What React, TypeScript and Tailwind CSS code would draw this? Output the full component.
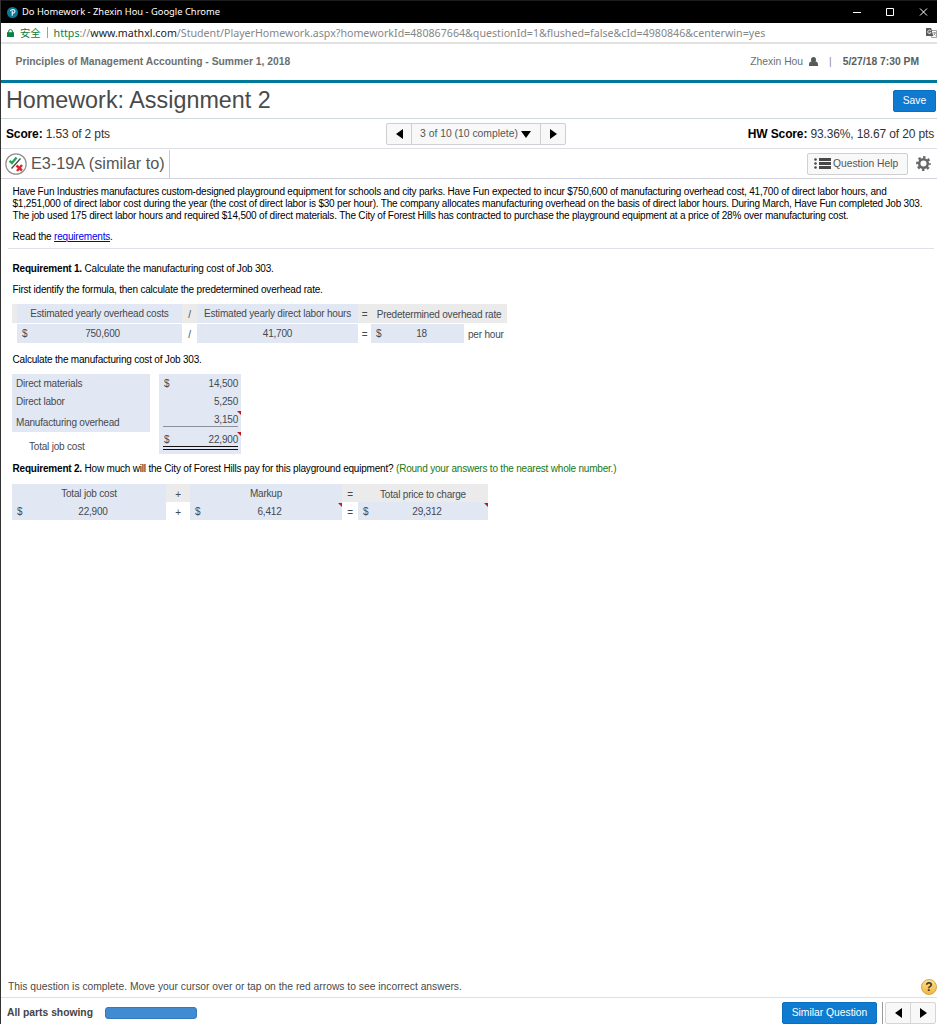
import { clsx } from "clsx";
import type { ReactNode } from "react";

export default function App() {
  return (
    <div className="flex h-[1024px] w-[937px] flex-col overflow-hidden whitespace-nowrap border-l border-[#333333] bg-white font-['Liberation_Sans',Arial,sans-serif] leading-[12px] text-black">
      <TitleBar />
      <AddressBar />
      <CourseHeader />
      <AssignmentHeader />
      <main className="min-h-0 flex-1 pl-[11px] text-[10px] tracking-[-0.2px]">
        <Problem />
        <RequirementOne />
        <RequirementTwo />
      </main>
      <StatusLine />
      <Footer />
    </div>
  );
}

function TitleBar() {
  return (
    <div className="flex h-[23px] shrink-0 items-center border-t border-[#1c1c1c] bg-black pl-[6px] pr-[8px] text-white">
      <svg viewBox="0 0 12 12" className="h-[11px] w-[11px]">
        <circle cx="6" cy="6" r="6" fill="#087a9c" />
        <path
          d="M3.6 4.2c1.8-2.2 5.2-1.8 5.1.5-.1 1.5-1.6 2-3.2 1.8M5.7 3.8v5.7"
          fill="none"
          stroke="#fff"
          strokeWidth="1.1"
        />
      </svg>
      <span className="ml-[4px] font-['Noto_Sans',sans-serif] text-[9.35px]">
        Do Homework - Zhexin Hou - Google Chrome
      </span>
      <svg viewBox="0 0 77 10" className="ml-auto h-[10px] w-[77px]" fill="none" stroke="#fff">
        <path d="M1 5.5h8M34.5 1.5h7v7h-7zM68 1.5l7 7M75 1.5l-7 7" />
      </svg>
    </div>
  );
}

function AddressBar() {
  return (
    <div className="flex h-[21px] shrink-0 items-center border-b-2 border-[#e2e2e2] pl-[6px] font-['Noto_Sans',sans-serif] text-[10.65px] text-[#868686]">
      <svg viewBox="0 0 7 8" className="h-[8px] w-[7px]">
        <path d="M0 3.2h7V8H0z" fill="#0b8043" />
        <path d="M1.7 4V2a1.8 1.4 0 0 1 3.6 0v2" fill="none" stroke="#0b8043" />
      </svg>
      <span className="ml-[6px] font-['Noto_Sans_CJK_SC',sans-serif] text-[10.3px] text-[#0b8043]">
        安全
      </span>
      <span className="ml-[6px] h-[11px] w-px bg-[#a0a0a0]" />
      <span className="ml-[6px]">
        <span className="text-[#0b8043]">https</span>://<span className="text-[#222222]">www.mathxl.com</span>
        /Student/PlayerHomework.aspx?homeworkId=480867664&amp;questionId=1&amp;flushed=false&amp;cId=4980846&amp;centerwin=yes
      </span>
      <svg viewBox="0 0 11 10" className="ml-auto h-[10px] w-[11px]">
        <path d="M3.5 2.5h7v7h-5z" fill="#fff" stroke="#8a8a8a" strokeWidth=".8" />
        <path d="M0 0h5.2l2 8H0z" fill="#5a5a5a" />
        <path d="M4.9 3A1.7 1.7 0 1 0 5 4.6H3.6" fill="none" stroke="#fff" strokeWidth=".8" />
        <path d="M7 4.8h3M8.5 4v.8M9.5 4.8 7.6 7.4M7.8 5.8l1.8 1.7" stroke="#777" strokeWidth=".7" />
      </svg>
    </div>
  );
}

function CourseHeader() {
  return (
    <div className="flex h-[39px] shrink-0 items-center border-b-[3px] border-[#007a9c] pl-[14.5px] pr-[18px] text-[10.32px] text-[#6a7070]">
      <span className="font-bold">Principles of Management Accounting - Summer 1, 2018</span>
      <span className="ml-auto">Zhexin Hou</span>
      <svg viewBox="0 0 9 9" className="mb-px ml-[6px] h-[9px] w-[9px]" fill="#555b5b">
        <ellipse cx="4.5" cy="2.7" rx="2.5" ry="2.7" />
        <path d="M2 4.6h5C8.5 5 9 6.3 9 7.7V9H0V7.7C0 6.3.5 5 2 4.6z" />
      </svg>
      <span className="ml-[11px] text-[#8a8f8f]">|</span>
      <span className="ml-[11px] font-bold text-[#5a6060]">5/27/18 7:30 PM</span>
    </div>
  );
}

function AssignmentHeader() {
  return (
    <header className="shrink-0 text-[12px] tracking-[-0.14px]">
      <div className="flex h-[36px] items-center border-b border-[#d0d8dc] pl-[5px] pr-px">
        <h1 className="pb-px text-[23.3px] leading-[28px] tracking-[0.03px] text-[#4a4a4a]">Homework: Assignment 2</h1>
        <PrimaryButton className="ml-auto w-[43px]">Save</PrimaryButton>
      </div>
      <div className="grid h-[30px] grid-cols-[385px_180px_1fr] items-center border-b border-[#dcdee8] pl-[5px] pr-[3px] text-[#333333]">
        <span>
          <b className="text-black">Score:</b> 1.53 of 2 pts
        </span>
        <div className="-ml-[5px] flex h-[22px] w-[180px] divide-x divide-[#cfcfcf] rounded-[2px] border border-[#cfcfcf] bg-[#f8f8f8] text-[10.36px] tracking-normal text-[#555555]">
          <ArrowCell direction="left" className="w-[25px]" />
          <div className="flex flex-1 items-center pl-[8px]">
            3 of 10 (10 complete)
            <svg viewBox="0 0 10 7" className="ml-[3px] mt-px h-[7px] w-[10px]">
              <path d="M0 0h10L5 7z" />
            </svg>
          </div>
          <ArrowCell direction="right" className="w-[24px]" />
        </div>
        <span className="text-right">
          <b className="text-black">HW Score:</b> 93.36%, 18.67 of 20 pts
        </span>
      </div>
      <div className="flex h-[30px] items-center border-b border-[#d4d4e0] pl-[4px] pr-[6px] tracking-normal">
        <CheckCrossIcon />
        <h2 className="ml-[4px] pb-[2px] text-[16.25px] leading-[20px] text-[#555555]">E3-19A (similar to)</h2>
        <span className="ml-[4px] h-[28px] w-px bg-[#c8ccd8]" />
        <div className="ml-auto flex h-[22px] w-[101px] items-center rounded-[2px] border border-[#d0d0d0] bg-[#f8f8f8] pl-[6px] text-[10.3px] text-[#555555]">
          <svg viewBox="0 0 17 11" className="h-[11px] w-[17px]" fill="#484848">
            <path d="M5 0h12v3H5zM5 4h12v3H5zM5 8h12v3H5z" />
            <circle cx="1.5" cy="1.5" r="1.3" />
            <circle cx="1.5" cy="5.5" r="1.3" />
            <circle cx="1.5" cy="9.5" r="1.3" />
          </svg>
          <span className="ml-[2px]">Question Help</span>
        </div>
        <GearIcon />
      </div>
    </header>
  );
}

function Problem() {
  return (
    <section className="pl-[0.5px] pt-[7px]">
      <p>
        Have Fun Industries manufactures custom-designed playground equipment for schools and city parks. Have Fun
        expected to incur $750,600 of manufacturing overhead cost, 41,700 of direct labor hours, and
        <br />
        $1,251,000 of direct labor cost during the year (the cost of direct labor is $30 per hour). The company
        allocates manufacturing overhead on the basis of direct labor hours. During March, Have Fun completed Job 303.
        <br />
        The job used 175 direct labor hours and required $14,500 of direct materials. The City of Forest Hills has
        contracted to purchase the playground equipment at a price of 28% over manufacturing cost.
      </p>
      <p className="mt-[9px]">
        Read the <a href="#requirements" className="text-[#0000ee] underline">requirements</a>.
      </p>
      <hr className="-ml-[5px] mr-[3px] mt-[5px] border-[#dfe1e8]" />
    </section>
  );
}

function RequirementOne() {
  return (
    <section>
      <p className="mt-[14px] pl-[0.5px]">
        <b>Requirement 1.</b> Calculate the manufacturing cost of Job 303.
      </p>
      <p className="mt-[9px] pl-[0.5px]">
        First identify the formula, then calculate the predetermined overhead rate.
      </p>

      <div className="mt-[8px] grid w-[495px] grid-cols-[5px_165px_15px_161px_13px_93px_43px] grid-rows-[19px_19px] gap-y-px text-center leading-[20px] text-[#444a50]">
        <Cell tone="gray" />
        <Cell tone="blue">Estimated yearly overhead costs</Cell>
        <Cell tone="gray" low>/</Cell>
        <Cell tone="blue">Estimated yearly direct labor hours</Cell>
        <Cell tone="gray" low>=</Cell>
        <Cell tone="gray" low className="col-span-2">Predetermined overhead rate</Cell>

        <Cell />
        <Money dollar className="pl-[6px]">750,600</Money>
        <Cell low>/</Cell>
        <Money>41,700</Money>
        <Cell low>=</Cell>
        <Money dollar className="pl-[8px]">18</Money>
        <Cell low className="pl-[4px] text-left">per hour</Cell>
      </div>

      <p className="mt-[11px] pl-[0.5px]">Calculate the manufacturing cost of Job 303.</p>

      <div className="mt-[8px] flex h-[80px] text-[#444a50]">
        <div className="w-[138px]">
          <div className="h-[58px] bg-[#e2e8f3] pl-[4px] pt-[4px]">
            <div className="h-[18px]">Direct materials</div>
            <div className="h-[21px]">Direct labor</div>
            <div>Manufacturing overhead</div>
          </div>
          <div className="pl-[17px] pt-[9px]">Total job cost</div>
        </div>
        <div className="relative ml-[9px] w-[82px] bg-[#e2e8f3] pl-[4px] pr-[3px] pt-[4px]">
          <div className="flex h-[18px] justify-between pl-px">
            <span>$</span>
            <span>14,500</span>
          </div>
          <div className="h-[18px] text-right">5,250</div>
          <div className="h-[13px] border-b border-[#8a8f98] text-right">3,150</div>
          <div className="mt-[7px] flex h-[16px] justify-between border-b-[4px] border-double border-[#111111] pl-px leading-[12px]">
            <span>$</span>
            <span>22,900</span>
          </div>
          <RedCorner className="top-[37px]" />
          <RedCorner className="top-[58px]" />
        </div>
      </div>
    </section>
  );
}

function RequirementTwo() {
  return (
    <section>
      <p className="mt-[9px] pl-[0.5px]">
        <b>Requirement 2.</b> How much will the City of Forest Hills pay for this playground equipment?{" "}
        <span className="text-[#177817]">(Round your answers to the nearest whole number.)</span>
      </p>
      <div className="mt-[9px] grid w-[476px] grid-cols-[154px_24px_152px_16px_130px] grid-rows-[18px_18px] text-center leading-[19px] text-[#444a50]">
        <Cell tone="blue">Total job cost</Cell>
        <Cell tone="gray" low>+</Cell>
        <Cell tone="blue">Markup</Cell>
        <Cell tone="gray" low>=</Cell>
        <Cell tone="gray" low>Total price to charge</Cell>

        <Money dollar className="pl-[8px]">22,900</Money>
        <Cell low>+</Cell>
        <Money dollar className="pl-[7px]" wrong>6,412</Money>
        <Cell low>=</Cell>
        <Money dollar className="pl-[8px]" wrong>29,312</Money>
      </div>
    </section>
  );
}

function StatusLine() {
  return (
    <div className="flex h-[20px] shrink-0 items-center pl-[7px] text-[10.3px] text-[#4a4a4a]">
      This question is complete. Move your cursor over or tap on the red arrows to see incorrect answers.
      <span className="ml-auto flex h-[16px] w-[16px] items-center justify-center rounded-full border border-[#d3a544] bg-linear-to-b from-[#ffe08a] to-[#efb83c] text-[12px] font-bold text-[#333333]">
        ?
      </span>
    </div>
  );
}

function Footer() {
  return (
    <footer className="flex h-[27px] shrink-0 border-t border-[#dcdfe6] pl-[6px] pt-[4px] text-[10.32px]">
      <span className="pt-[5px] font-bold text-[#444444]">All parts showing</span>
      <span className="ml-[12px] mt-[5px] h-[12px] w-[92px] rounded-[3px] border border-[#3579bd] bg-[#428bd0]" />
      <PrimaryButton className="ml-auto w-[95px]">Similar Question</PrimaryButton>
      <span className="ml-[5px] h-[22px] w-px bg-[#999999]" />
      <div className="ml-[2px] mr-px flex h-[22px] w-[51px] divide-x divide-[#d5d5d5] rounded-[2px] border border-[#d5d5d5] bg-[#f8f8f8]">
        <ArrowCell direction="left" className="w-[25px]" />
        <ArrowCell direction="right" className="w-[24px]" />
      </div>
    </footer>
  );
}

type CellProps = {
  tone?: "blue" | "gray";
  low?: boolean;
  className?: string;
  children?: ReactNode;
};

function Cell({ tone, low, className, children }: CellProps) {
  return (
    <div
      className={clsx(
        tone === "blue" && "bg-[#e2e8f3]",
        tone === "gray" && "bg-[#ebebeb]",
        low && "h-full pt-px",
        className,
      )}
    >
      {children}
    </div>
  );
}

type MoneyProps = {
  dollar?: boolean;
  wrong?: boolean;
  className?: string;
  children: ReactNode;
};

function Money({ dollar, wrong, className, children }: MoneyProps) {
  return (
    <div className={clsx("relative bg-[#e2e8f3]", className)}>
      {dollar && <span className="absolute left-[5px]">$</span>}
      {children}
      {wrong && <RedCorner className="top-px" />}
    </div>
  );
}

function RedCorner({ className }: { className?: string }) {
  return (
    <svg viewBox="0 0 4 4" className={clsx("absolute right-0 h-[4px] w-[4px]", className)}>
      <path d="M0 0h4v4z" fill="#c4161c" />
    </svg>
  );
}

function PrimaryButton({ className, children }: { className?: string; children: ReactNode }) {
  return (
    <button
      className={clsx(
        "h-[22px] rounded-[2px] border border-[#0b6fc0] bg-[#0f7bd0] text-[10.32px] tracking-normal text-white",
        className,
      )}
    >
      {children}
    </button>
  );
}

function ArrowCell({ direction, className }: { direction: "left" | "right"; className?: string }) {
  return (
    <div className={clsx("flex items-center justify-center", className)}>
      <svg viewBox="0 0 7 10" className="h-[10px] w-[7px]">
        <path d={direction === "left" ? "M7 0v10L0 5z" : "M0 0v10l7-5z"} />
      </svg>
    </div>
  );
}

function CheckCrossIcon() {
  return (
    <svg viewBox="0 0 22 22" className="h-[22px] w-[22px]" fill="none">
      <circle cx="11" cy="11" r="10.2" fill="#fff" stroke="#8f8f8f" strokeWidth="1.2" />
      <path d="M4.5 7.8 7 10l4.5-5.5" stroke="#27a35a" strokeWidth="2.4" />
      <path d="M6.5 15.5 15.5 5.5" stroke="#444" strokeWidth="1.2" />
      <path d="m11.5 12.5 5.5 5M17 12l-5 6" stroke="#e0262d" strokeWidth="2.4" />
    </svg>
  );
}

// Eight teeth round a ring
function GearIcon() {
  return (
    <svg viewBox="0 0 14 14" className="ml-[8px] h-[15px] w-[15px]" fill="none" stroke="#666666">
      <circle cx="7" cy="7" r="4" strokeWidth="2.3" />
      <circle cx="7" cy="7" r="5.9" strokeWidth="2" strokeDasharray="2.317 2.317" strokeDashoffset="1.158" />
    </svg>
  );
}
